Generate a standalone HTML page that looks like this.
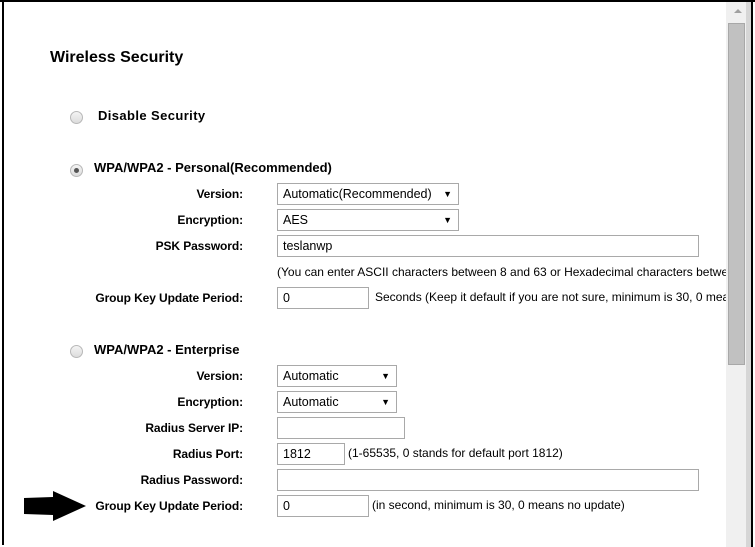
<!DOCTYPE html>
<html><head><meta charset="utf-8"><style>
*{margin:0;padding:0;box-sizing:border-box}
body{width:755px;height:547px;background:#fff;position:relative;overflow:hidden;font-family:"Liberation Sans",Arial,sans-serif;font-size:12px;color:#000}
.a{position:absolute;white-space:nowrap}
.b{font-weight:bold}
.l{position:absolute;right:512px;font-weight:bold;font-size:12px;white-space:nowrap;letter-spacing:-0.1px}
.box{position:absolute;border:1px solid #a9a9a9;background:#fff;height:22px;padding-left:5px;line-height:21px;font-size:12.5px;white-space:nowrap}
.dd{position:absolute;right:6px;top:0;font-size:9px}
.r{position:absolute;width:13px;height:13px;border-radius:50%;border:1px solid #b8b8b8;background:linear-gradient(#f4f4f4,#dcdcdc)}
.r i{position:absolute;left:3px;top:3px;width:5px;height:5px;border-radius:50%;background:#555}
</style></head><body>
<div class="a" style="left:0;top:0;width:755px;height:2px;background:#000"></div>
<div class="a" style="left:2px;top:0;width:2px;height:545px;background:#000"></div>
<div class="a" style="left:726px;top:2px;width:20px;height:545px;background:#f0f0f0"></div>
<div class="a" style="left:734px;top:9px;width:0;height:0;border-left:4px solid transparent;border-right:4px solid transparent;border-bottom:4px solid #a0a0a0"></div>
<div class="a" style="left:728px;top:23px;width:17px;height:342px;background:#c1c1c1;border:1px solid #a8a8a8"></div>
<div class="a" style="left:746px;top:2px;width:5px;height:545px;background:#d6d6d6"></div>
<div class="a" style="left:751px;top:0;width:2px;height:547px;background:#000"></div>

<div class="a b" style="left:50px;top:49px;font-size:16px">Wireless Security</div>

<div class="r" style="left:70px;top:111px"></div>
<div class="a b" style="left:98px;top:108px;font-size:13px;letter-spacing:0.4px">Disable Security</div>

<div class="r" style="left:70px;top:164px"><i></i></div>
<div class="a b" style="left:94px;top:160px;font-size:13px">WPA/WPA2 - Personal(Recommended)</div>

<div class="l" style="top:187px">Version:</div>
<div class="box" style="left:277px;top:183px;width:182px">Automatic(Recommended)<span class="dd">▼</span></div>
<div class="l" style="top:213px">Encryption:</div>
<div class="box" style="left:277px;top:209px;width:182px">AES<span class="dd">▼</span></div>
<div class="l" style="top:239px">PSK Password:</div>
<div class="box" style="left:277px;top:235px;width:422px">teslanwp</div>
<div class="a" style="left:277px;top:265px;width:449px;overflow:hidden">(You can enter ASCII characters between 8 and 63 or Hexadecimal characters between 8 and 64.)</div>
<div class="l" style="top:291px">Group Key Update Period:</div>
<div class="box" style="left:277px;top:287px;width:92px">0</div>
<div class="a" style="left:375px;top:290px;width:351px;overflow:hidden">Seconds (Keep it default if you are not sure, minimum is 30, 0 means no update)</div>

<div class="r" style="left:70px;top:345px"></div>
<div class="a b" style="left:94px;top:342px;font-size:13px">WPA/WPA2 - Enterprise</div>

<div class="l" style="top:369px">Version:</div>
<div class="box" style="left:277px;top:365px;width:120px">Automatic<span class="dd">▼</span></div>
<div class="l" style="top:395px">Encryption:</div>
<div class="box" style="left:277px;top:391px;width:120px">Automatic<span class="dd">▼</span></div>
<div class="l" style="top:421px">Radius Server IP:</div>
<div class="box" style="left:277px;top:417px;width:128px"></div>
<div class="l" style="top:447px">Radius Port:</div>
<div class="box" style="left:277px;top:443px;width:68px">1812</div>
<div class="a" style="left:348px;top:446px">(1-65535, 0 stands for default port 1812)</div>
<div class="l" style="top:473px">Radius Password:</div>
<div class="box" style="left:277px;top:469px;width:422px"></div>
<div class="l" style="top:499px">Group Key Update Period:</div>
<div class="box" style="left:277px;top:495px;width:92px">0</div>
<div class="a" style="left:372px;top:498px">(in second, minimum is 30, 0 means no update)</div>

<svg class="a" style="left:0;top:0" width="100" height="547"><path d="M24 498 L53 497 L53 491 L86 506 L53 521 L53 515 L24 514 Z" fill="#000"/></svg>
</body></html>
